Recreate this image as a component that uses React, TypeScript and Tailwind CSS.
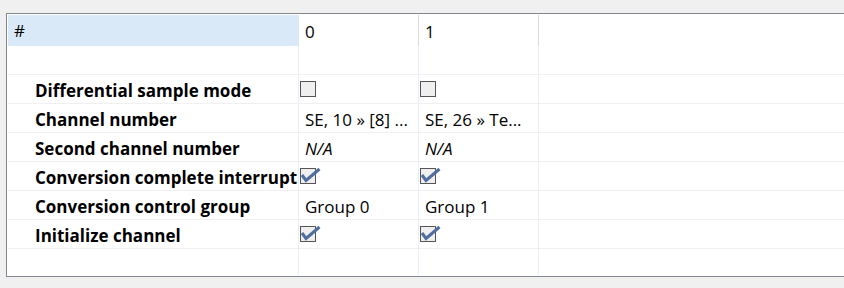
import React from 'react';

type Cell =
  | { kind: 'text'; value: string; italic?: boolean }
  | { kind: 'check'; checked: boolean };

const rows: { label: string; cells: Cell[] }[] = [
  {
    label: 'Differential sample mode',
    cells: [
      { kind: 'check', checked: false },
      { kind: 'check', checked: false },
    ],
  },
  {
    label: 'Channel number',
    cells: [
      { kind: 'text', value: 'SE, 10 » [8] ...' },
      { kind: 'text', value: 'SE, 26 » Te...' },
    ],
  },
  {
    label: 'Second channel number',
    cells: [
      { kind: 'text', value: 'N/A', italic: true },
      { kind: 'text', value: 'N/A', italic: true },
    ],
  },
  {
    label: 'Conversion complete interrupt',
    cells: [
      { kind: 'check', checked: true },
      { kind: 'check', checked: true },
    ],
  },
  {
    label: 'Conversion control group',
    cells: [
      { kind: 'text', value: 'Group 0' },
      { kind: 'text', value: 'Group 1' },
    ],
  },
  {
    label: 'Initialize channel',
    cells: [
      { kind: 'check', checked: true },
      { kind: 'check', checked: true },
    ],
  },
];

const CheckBox: React.FC<{ checked: boolean }> = ({ checked }) => (
  <div className="relative w-4 h-4 ml-[1px] border border-[#555555] bg-[#efefef]">
    {checked && (
      <svg className="absolute left-[-1px] top-[-1px] overflow-visible" width="21" height="17" viewBox="0 0 21 17">
        <polyline points="2,7 6,12.5 19.5,1" fill="none" stroke="#4f6e9f" strokeWidth="3" />
      </svg>
    )}
  </div>
);

const CellView: React.FC<{ cell: Cell }> = ({ cell }) => {
  if (cell.kind === 'check') {
    return (
      <div className="flex items-center h-full border-r border-[#e6eef9]">
        <CheckBox checked={cell.checked} />
      </div>
    );
  }
  return (
    <div
      className={`flex items-center h-full pl-[6px] pt-[3px] border-r border-[#e6eef9] whitespace-nowrap overflow-hidden ${
        cell.italic ? 'italic' : ''
      }`}
    >
      {cell.value}
    </div>
  );
};

const gridCols = 'grid grid-cols-[291px_120px_120px_1fr]';

const App: React.FC = () => {
  return (
    <div
      className="w-[844px] h-[288px] bg-[#f0f0f0] overflow-hidden pl-[6px] pt-[13px] text-black text-[17px]"
      style={{ fontFamily: '"Open Sans", "Noto Sans", sans-serif' }}
    >
      <div className="w-[860px] h-[264px] border-l border-t border-b border-[#828790] bg-white p-[1px] flex flex-col">
        {/* header */}
        <div className={`${gridCols} h-[31px] shrink-0`}>
          <div className="bg-[#d9e9f8] flex items-center pl-[6px] pt-[1px]">#</div>
          <div className="flex items-center pl-[6px] pt-[2px] border-r border-[#dadada]">0</div>
          <div className="flex items-center pl-[6px] pt-[2px] border-r border-[#dadada]">1</div>
          <div />
        </div>

        {/* empty row */}
        <div className={`${gridCols} h-[29px] shrink-0 border-b border-[#f0f0f0]`}>
          <div className="border-r border-[#e6eef9]" />
          <div className="border-r border-[#e6eef9]" />
          <div className="border-r border-[#e6eef9]" />
          <div />
        </div>

        {rows.map((row) => (
          <div key={row.label} className={`${gridCols} h-[29px] shrink-0 border-b border-[#f0f0f0]`}>
            <div className="flex items-center pl-[27px] pt-[3px] font-bold whitespace-nowrap border-r border-[#e6eef9]">
              {row.label}
            </div>
            {row.cells.map((c, i) => (
              <CellView key={i} cell={c} />
            ))}
            <div />
          </div>
        ))}

        {/* filler */}
        <div className={`${gridCols} flex-1`}>
          <div className="border-r border-[#e6eef9]" />
          <div className="border-r border-[#e6eef9]" />
          <div className="border-r border-[#e6eef9]" />
          <div />
        </div>
      </div>
    </div>
  );
};

export default App;
